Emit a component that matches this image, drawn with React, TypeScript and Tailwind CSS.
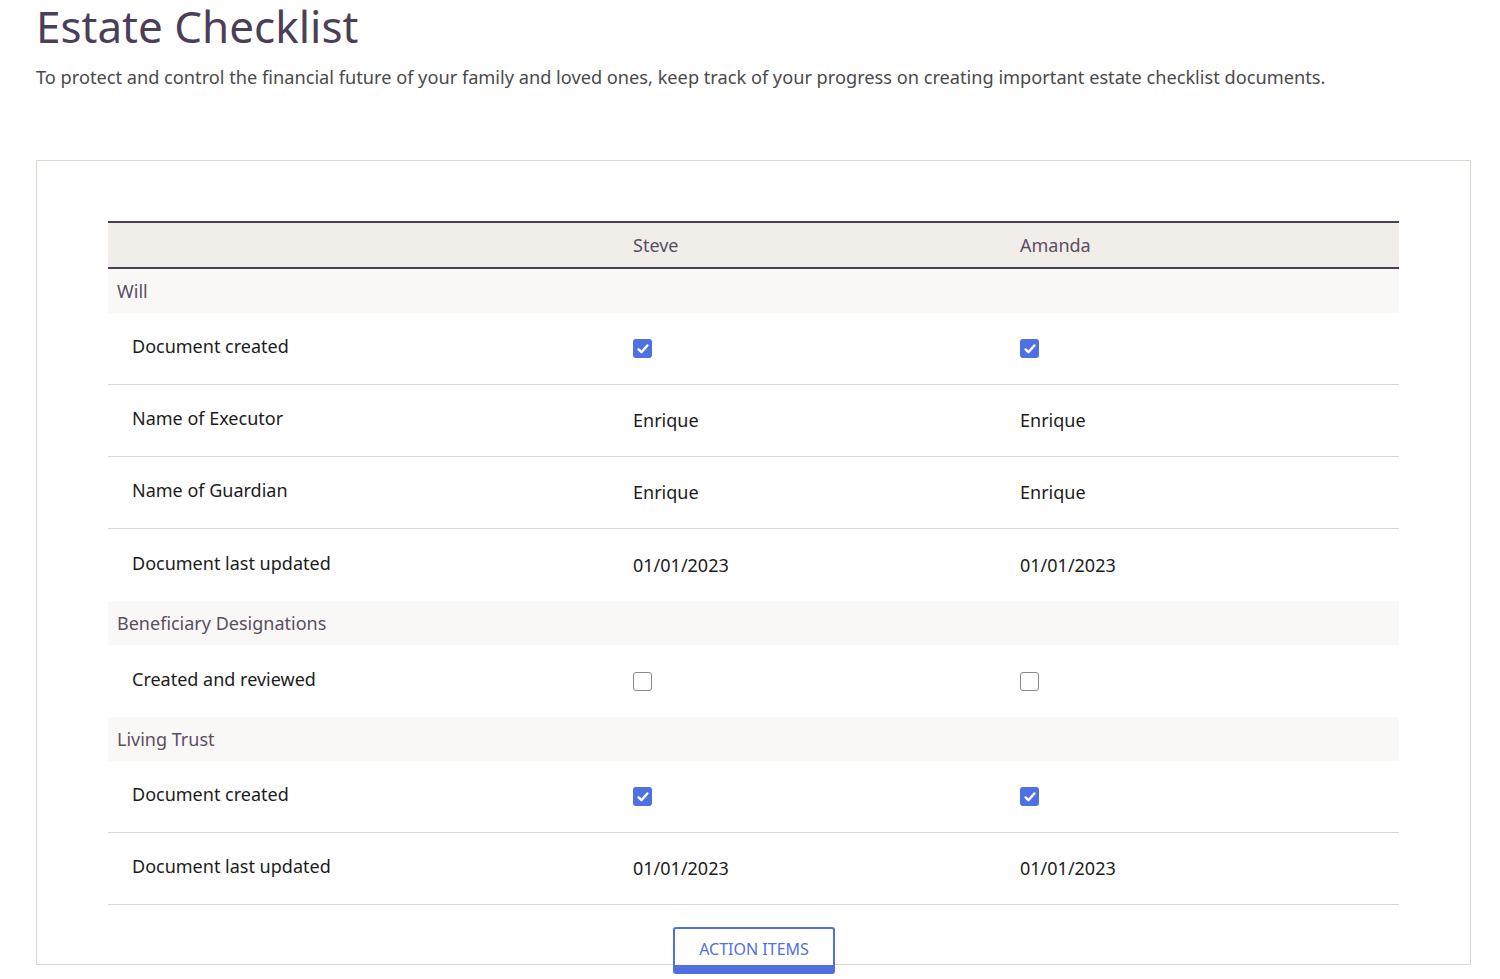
import React from 'react'

type Row =
  | { kind: 'group'; label: string }
  | { kind: 'check'; label: string; a: boolean; b: boolean; border: boolean }
  | { kind: 'text'; label: string; a: string; b: string; border: boolean }

const rows: Row[] = [
  { kind: 'group', label: 'Will' },
  { kind: 'check', label: 'Document created', a: true, b: true, border: true },
  { kind: 'text', label: 'Name of Executor', a: 'Enrique', b: 'Enrique', border: true },
  { kind: 'text', label: 'Name of Guardian', a: 'Enrique', b: 'Enrique', border: true },
  { kind: 'text', label: 'Document last updated', a: '01/01/2023', b: '01/01/2023', border: false },
  { kind: 'group', label: 'Beneficiary Designations' },
  { kind: 'check', label: 'Created and reviewed', a: false, b: false, border: false },
  { kind: 'group', label: 'Living Trust' },
  { kind: 'check', label: 'Document created', a: true, b: true, border: true },
  { kind: 'text', label: 'Document last updated', a: '01/01/2023', b: '01/01/2023', border: true },
]

function Box({ checked }: { checked: boolean }) {
  if (!checked)
    return <span className="block w-[19px] h-[19px] rounded-[3px] border-[1.5px] border-[#8a8a8a] bg-white" />
  return (
    <span className="flex items-center justify-center w-[19px] h-[19px] rounded-[3px] bg-[#4f6fe3]">
      <svg width="14" height="14" viewBox="0 0 16 16" fill="none">
        <path d="M3 8.5l3.2 3.2L13 4" stroke="white" strokeWidth="2.8" strokeLinecap="round" strokeLinejoin="round" />
      </svg>
    </span>
  )
}

export default function App() {
  return (
    <div className="min-h-[979px] bg-white px-[36px] pt-[2px] font-['Roboto',sans-serif]">
      <h1 className="text-[44px] leading-[48px] text-[#4b3f57]">Estate Checklist</h1>
      <p className="mt-[14px] text-[18.2px] leading-[26px] text-[#4a4a4a]">
        To protect and control the financial future of your family and loved ones, keep track of your progress on creating important estate checklist documents.
      </p>

      <div className="mt-[70px] w-[1435px] border border-[#ddd6cf] pt-[60px] px-[71px] h-[805px] flex flex-col">
        <div className="border-t-2 border-[#4b3f57]">
          <div className="grid grid-cols-[525px_387px_1fr] h-[46px] items-center bg-[#f1eeea] border-b-2 border-[#4b3f57] text-[18px] text-[#5a4e63]">
            <div />
            <div>Steve</div>
            <div>Amanda</div>
          </div>
          {rows.map((r, i) =>
            r.kind === 'group' ? (
              <div key={i} className="h-[44px] flex items-center bg-[#faf8f6] pl-[9px] text-[18px] text-[#5a4e63]">
                {r.label}
              </div>
            ) : (
              <div
                key={i}
                className={`grid grid-cols-[525px_387px_1fr] h-[72px] items-center text-[18px] text-[#1c1c1c] ${r.border ? 'border-b border-[#dcd6d0]' : ''}`}
              >
                <div className="pl-[24px] -mt-[4px]">{r.label}</div>
                {r.kind === 'check' ? (
                  <>
                    <div><Box checked={r.a} /></div>
                    <div><Box checked={r.b} /></div>
                  </>
                ) : (
                  <>
                    <div>{r.a}</div>
                    <div>{r.b}</div>
                  </>
                )}
              </div>
            )
          )}
        </div>
        <div className="mt-auto flex justify-center -mb-[10px]">
          <button className="ml-[1px] w-[162px] h-[47px] bg-white border-2 border-b-[9px] border-[#4f6fe3] rounded-[3px] text-[16px] text-[#4f6fe3] pt-[4px]">
            ACTION ITEMS
          </button>
        </div>
      </div>
    </div>
  )
}
